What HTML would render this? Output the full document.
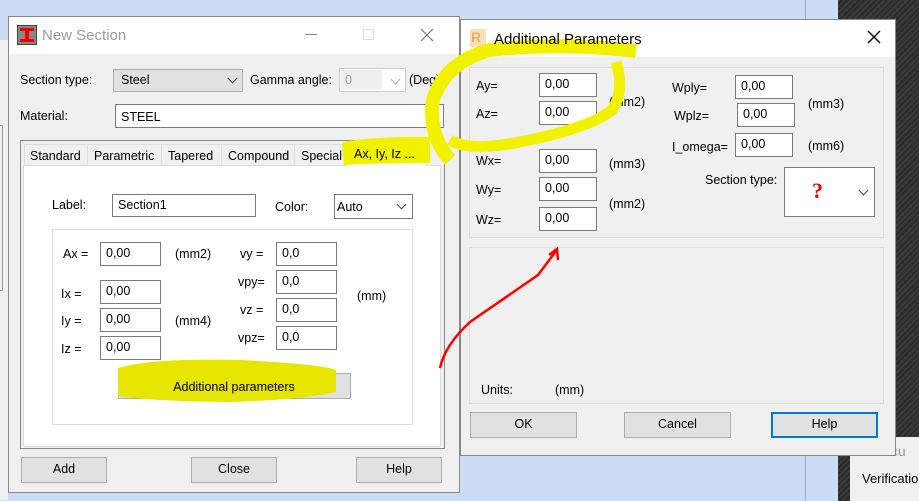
<!DOCTYPE html>
<html><head><meta charset="utf-8"><style>
*{box-sizing:border-box;margin:0;padding:0}
body{width:919px;height:501px;overflow:hidden;position:relative;background:#cddcf5;font-family:"Liberation Sans",sans-serif;font-size:12.5px;color:#000}
.a{position:absolute}
.box{position:absolute;background:#fff;border:1px solid #7a7a7a;padding:2px 0 0 5px;font-size:12.5px;line-height:16px}
.btn{position:absolute;background:#e1e1e1;border:1px solid #adadad;text-align:center;line-height:23px}
.t{position:absolute;white-space:nowrap}
.chev{position:absolute;width:7px;height:7px;border-right:1px solid #444;border-bottom:1px solid #444;transform:rotate(45deg)}
</style></head><body>
<div class="a" style="left:0;top:40px;width:8px;height:460px;background:#f0f0f0"></div>
<div class="a" style="left:0;top:125px;width:3px;height:166px;border:1px solid #999;border-left:none"></div>
<div class="a" style="left:805px;top:0;width:33px;height:501px;background:#cddcf5;border-left:1px solid #aab"></div>
<div class="a" style="left:838px;top:0;width:81px;height:501px;background:repeating-linear-gradient(135deg,#3a3a3a 0 2px,#2c2c2c 2px 4px)"></div>
<div class="a" style="left:850px;top:437px;width:69px;height:64px;background:#f0f0f0"></div>
<div class="t" style="left:880px;top:443px;color:#999;font-size:14px">alcu</div>
<div class="t" style="left:862px;top:471px;font-size:13px">Verificatio</div>

<!-- New Section dialog -->
<div class="a" style="left:8px;top:16px;width:452px;height:477px;background:#f0f0f0;border:1px solid #888"></div>
<div class="a" style="left:9px;top:17px;width:450px;height:37px;background:#fff"></div>
<div class="a" style="left:17px;top:25px;width:20px;height:20px;background:#888;border:1px solid #444">
 <div class="a" style="left:2px;top:2px;width:14px;height:3px;background:#e00"></div>
 <div class="a" style="left:7px;top:4px;width:4px;height:10px;background:#e00"></div>
 <div class="a" style="left:2px;top:13px;width:14px;height:3px;background:#e00"></div>
</div>
<div class="t" style="left:42px;top:27px;font-size:15px;color:#999">New Section</div>
<div class="a" style="left:305px;top:34px;width:12px;height:1px;background:#888"></div>
<div class="a" style="left:363px;top:29px;width:11px;height:11px;border:1px solid #ddd"></div>
<svg class="a" style="left:420px;top:28px" width="14" height="14"><path d="M1 1L13 13M13 1L1 13" stroke="#777" stroke-width="1.2"/></svg>

<div class="t" style="left:20px;top:73px">Section type:</div>
<div class="a" style="left:113px;top:69px;width:130px;height:23px;background:#e1e1e1;border:1px solid #adadad"></div>
<div class="t" style="left:121px;top:73px">Steel</div>
<div class="chev" style="left:229px;top:75px"></div>
<div class="t" style="left:250px;top:73px">Gamma angle:</div>
<div class="a" style="left:339px;top:68px;width:67px;height:24px;background:#fff;border:1px solid #ccc"></div>
<div class="a" style="left:341px;top:70px;width:41px;height:19px;background:#eee"></div>
<div class="t" style="left:345px;top:73px;color:#999">0</div>
<div class="chev" style="left:392px;top:76px;border-color:#aaa"></div>
<div class="t" style="left:409px;top:73px">(Deg)</div>
<div class="t" style="left:20px;top:109px">Material:</div>
<div class="box" style="left:115px;top:104px;width:329px;height:24px;padding-top:4px">STEEL</div>
<div class="chev" style="left:430px;top:110px"></div>

<div class="a" style="left:20px;top:140px;width:425px;height:309px;border:1px solid #888;background:#f0f0f0"></div>
<div class="a" style="left:23px;top:165px;width:418px;height:282px;background:#fff;border:1px solid #ddd"></div>
<div class="a" style="left:24px;top:144px;width:322px;height:22px;background:#f0f0f0;border:1px solid #ddd"></div>
<div class="t" style="left:30px;top:149px">Standard</div>
<div class="a" style="left:87px;top:144px;width:1px;height:21px;background:#ddd"></div>
<div class="t" style="left:94px;top:149px">Parametric</div>
<div class="a" style="left:161px;top:144px;width:1px;height:21px;background:#ddd"></div>
<div class="t" style="left:168px;top:149px">Tapered</div>
<div class="a" style="left:221px;top:144px;width:1px;height:21px;background:#ddd"></div>
<div class="t" style="left:228px;top:149px">Compound</div>
<div class="a" style="left:294px;top:144px;width:1px;height:21px;background:#ddd"></div>
<div class="t" style="left:301px;top:149px">Special</div>
<div class="a" style="left:346px;top:141px;width:81px;height:25px;background:#fff;border:1px solid #ddd;border-bottom:none"></div>

<div class="t" style="left:52px;top:198px">Label:</div>
<div class="box" style="left:112px;top:194px;width:144px;height:23px">Section1</div>
<div class="t" style="left:275px;top:200px">Color:</div>
<div class="box" style="left:334px;top:194px;width:79px;height:25px;padding:4px 0 0 2px">Auto</div>
<div class="chev" style="left:398px;top:201px"></div>
<div class="a" style="left:52px;top:229px;width:361px;height:196px;border:1px solid #ddd"></div>

<div class="t" style="left:63px;top:247px">Ax =</div>
<div class="box" style="left:100px;top:242px;width:61px;height:24px">0,00</div>
<div class="t" style="left:175px;top:247px">(mm2)</div>
<div class="t" style="left:61px;top:287px">Ix =</div>
<div class="box" style="left:100px;top:280px;width:61px;height:24px">0,00</div>
<div class="t" style="left:61px;top:314px">Iy =</div>
<div class="box" style="left:100px;top:308px;width:61px;height:24px">0,00</div>
<div class="t" style="left:175px;top:314px">(mm4)</div>
<div class="t" style="left:61px;top:342px">Iz =</div>
<div class="box" style="left:100px;top:336px;width:61px;height:24px">0,00</div>

<div class="t" style="left:240px;top:247px">vy =</div>
<div class="box" style="left:276px;top:242px;width:61px;height:24px">0,0</div>
<div class="t" style="left:238px;top:275px">vpy=</div>
<div class="box" style="left:276px;top:270px;width:61px;height:24px">0,0</div>
<div class="t" style="left:240px;top:303px">vz =</div>
<div class="box" style="left:276px;top:298px;width:61px;height:24px">0,0</div>
<div class="t" style="left:238px;top:331px">vpz=</div>
<div class="box" style="left:276px;top:326px;width:61px;height:24px">0,0</div>
<div class="t" style="left:357px;top:289px">(mm)</div>

<div class="btn" style="left:118px;top:373px;width:233px;height:26px"></div>

<div class="btn" style="left:21px;top:457px;width:86px;height:26px">Add</div>
<div class="btn" style="left:191px;top:457px;width:86px;height:26px">Close</div>
<div class="btn" style="left:356px;top:457px;width:86px;height:26px">Help</div>

<!-- Additional Parameters dialog -->
<div class="a" style="left:460px;top:19px;width:436px;height:437px;background:#f0f0f0;border:1px solid #888"></div>
<div class="a" style="left:461px;top:20px;width:434px;height:37px;background:#fff"></div>
<div class="a" style="left:470px;top:29px;width:16px;height:18px;background:#f8e0b8"></div>
<div class="t" style="left:471px;top:29px;font-weight:bold;color:#eab060;font-size:14px">R</div>
<div class="a" style="left:461px;top:57px;width:434px;height:398px;background:#f0f0f0"></div>
<div class="a" style="left:469px;top:67px;width:415px;height:171px;border:1px solid #ddd"></div>
<div class="a" style="left:469px;top:247px;width:415px;height:157px;border:1px solid #ddd"></div>

<div class="t" style="left:476px;top:79px">Ay=</div>
<div class="box" style="left:539px;top:73px;width:58px;height:24px">0,00</div>
<div class="t" style="left:476px;top:107px">Az=</div>
<div class="box" style="left:539px;top:101px;width:58px;height:24px">0,00</div>
<div class="t" style="left:609px;top:95px">(mm2)</div>
<div class="box" style="left:539px;top:149px;width:58px;height:24px">0,00</div>
<div class="t" style="left:609px;top:157px">(mm3)</div>
<div class="t" style="left:476px;top:183px">Wy=</div>
<div class="box" style="left:539px;top:177px;width:58px;height:24px">0,00</div>
<div class="t" style="left:609px;top:197px">(mm2)</div>
<div class="t" style="left:476px;top:213px">Wz=</div>
<div class="box" style="left:539px;top:207px;width:58px;height:24px">0,00</div>

<div class="t" style="left:672px;top:81px">Wply=</div>
<div class="box" style="left:735px;top:75px;width:58px;height:24px">0,00</div>
<div class="t" style="left:674px;top:109px">Wplz=</div>
<div class="box" style="left:737px;top:103px;width:58px;height:24px">0,00</div>
<div class="t" style="left:808px;top:97px">(mm3)</div>
<div class="t" style="left:672px;top:140px">I_omega=</div>
<div class="box" style="left:735px;top:133px;width:58px;height:24px">0,00</div>
<div class="t" style="left:808px;top:139px">(mm6)</div>
<div class="t" style="left:705px;top:173px">Section type:</div>
<div class="a" style="left:784px;top:167px;width:91px;height:50px;background:#fff;border:1px solid #7a7a7a"></div>
<div class="t" style="left:812px;top:178px;color:#e00;font-family:'Liberation Serif',serif;font-size:22px;font-weight:bold">?</div>
<div class="chev" style="left:860px;top:187px"></div>

<div class="t" style="left:481px;top:383px">Units:</div>
<div class="t" style="left:555px;top:383px">(mm)</div>
<div class="btn" style="left:470px;top:412px;width:107px;height:26px">OK</div>
<div class="btn" style="left:624px;top:412px;width:107px;height:26px">Cancel</div>
<div class="btn" style="left:771px;top:412px;width:107px;height:26px;border:2px solid #0078d7;line-height:21px">Help</div>

<svg class="a" style="left:0;top:0" width="919" height="501">
 <path d="M636 51 Q560 42 490 50 Q445 62 433 100 Q428 135 450 160" fill="none" stroke="#f2f200" stroke-width="14"/>
 <path d="M450 140 Q470 152 520 142 Q590 128 612 110 Q625 90 616 62" fill="none" stroke="#f2f200" stroke-width="11"/>
 <path d="M342 142 Q380 136 430 137 L430 163 Q380 163 344 165 Z" fill="#f2f200"/>
 <path d="M440 368 Q445 345 470 322 L538 275 L556 251" fill="none" stroke="#f00" stroke-width="2.5"/>
 <path d="M549 255 L557 249 L558 260" fill="none" stroke="#f00" stroke-width="2.5"/>
 <path d="M118 368 Q150 358 240 360 Q320 364 336 370 L336 392 Q300 400 230 402 Q150 401 118 396 Z" fill="#e6e600"/>
 <text x="234" y="391" text-anchor="middle" font-family="Liberation Sans" font-size="12.5">Additional parameters</text>
 <text x="354" y="158" font-family="Liberation Sans" font-size="12.5">Ax, Iy, Iz ...</text>
 <text x="494" y="44" font-family="Liberation Sans" font-size="15">Additional Parameters</text>
 <text x="476" y="165" font-family="Liberation Sans" font-size="12.5">Wx=</text>
 <path d="M868 31L880 43M880 31L868 43" stroke="#000" stroke-width="1.4"/>
</svg>
</body></html>
